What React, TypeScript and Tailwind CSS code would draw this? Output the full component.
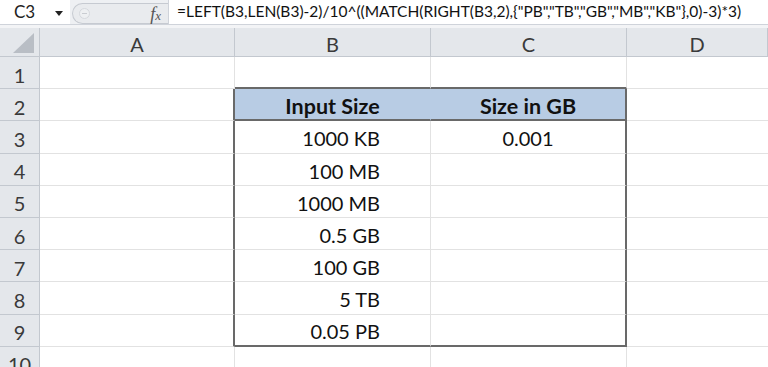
const rows: { n: number; b: string; c: string }[] = [
  { n: 1, b: '', c: '' },
  { n: 2, b: 'Input Size', c: 'Size in GB' },
  { n: 3, b: '1000 KB', c: '0.001' },
  { n: 4, b: '100 MB', c: '' },
  { n: 5, b: '1000 MB', c: '' },
  { n: 6, b: '0.5 GB', c: '' },
  { n: 7, b: '100 GB', c: '' },
  { n: 8, b: '5 TB', c: '' },
  { n: 9, b: '0.05 PB', c: '' },
  { n: 10, b: '', c: '' },
];

const formula = '=LEFT(B3,LEN(B3)-2)/10^((MATCH(RIGHT(B3,2),{"PB","TB","GB","MB","KB"},0)-3)*3)';

function aCls(n: number) {
  if (n >= 2 && n <= 9) return 'border-r-2 border-r-[#696969] border-b border-b-[#e2e2e2]';
  return 'border-r border-r-[#e2e2e2] border-b border-b-[#e2e2e2]';
}

function bCls(n: number) {
  if (n === 1) return 'border-r border-r-[#e2e2e2] border-b-2 border-b-[#696969]';
  if (n === 2) return 'bg-[#b8cce4] border-r border-r-[#b8cce4] border-b-2 border-b-[#696969] justify-center font-bold text-[21.5px]';
  if (n === 9) return 'border-r border-r-[#e2e2e2] border-b-2 border-b-[#696969] justify-end pr-[50px]';
  return 'border-r border-r-[#e2e2e2] border-b border-b-[#e2e2e2] justify-end pr-[50px]';
}

function cCls(n: number) {
  if (n === 1) return 'border-r border-r-[#e2e2e2] border-b-2 border-b-[#696969]';
  if (n === 2) return 'bg-[#b8cce4] border-r-2 border-r-[#696969] border-b-2 border-b-[#696969] justify-center font-bold text-[21.5px]';
  if (n === 9) return 'border-r-2 border-r-[#696969] border-b-2 border-b-[#696969] justify-center';
  if (n === 10) return 'border-r border-r-[#e2e2e2] border-b border-b-[#e2e2e2] justify-center';
  return 'border-r-2 border-r-[#696969] border-b border-b-[#e2e2e2] justify-center';
}

export default function App() {
  return (
    <div className="w-[768px] h-[367px] overflow-hidden bg-white text-[#111] font-['Lato',_'Open_Sans',_sans-serif]">
      {/* formula bar */}
      <div className="flex h-[25px] bg-[#eef0f3] border-b border-[#cfd3da]">
        <div className="w-[70px] bg-white flex items-center relative">
          <span className="ml-[14px] text-[17px] text-[#222]">C3</span>
          <svg className="absolute left-[55px] top-[11px]" width="8" height="5" viewBox="0 0 8 5">
            <path d="M0 0 L8 0 L4 5 Z" fill="#222" />
          </svg>
        </div>
        <div className="w-[98px] pt-[3px] pl-[2px]">
          <div className="h-[21px] rounded-l-full border border-r-0 border-[#c6cad1] bg-[#e9ebee] flex items-center">
            <div className="ml-[6px] w-[11px] h-[11px] rounded-full border border-[#d6d9de] bg-[#eef0f2] flex items-center justify-center">
              <div className="w-[5px] h-[1px] bg-[#c9ccd1]" />
            </div>
            <span className="ml-auto mr-[7px] font-['Liberation_Serif',_serif] italic text-[18px] text-[#555] leading-none">
              f<span className="text-[13px]">x</span>
            </span>
          </div>
        </div>
        <div className="flex-1 bg-white border-l border-[#cfd3da] flex items-center pl-[8px] text-[15.5px] text-[#111] whitespace-nowrap">
          {formula}
        </div>
      </div>
      <div className="h-[3px] bg-[#f3f4f6]" />

      {/* grid */}
      <div className="grid grid-cols-[40px_195px_196px_196px_1fr] grid-rows-[29px_repeat(10,32.2px)] text-[20px]">
        <div className="bg-[#e4e7eb] border-r border-b border-[#c3c8cf] relative">
          <svg className="absolute right-[5px] bottom-[3px]" width="21" height="20" viewBox="0 0 21 20">
            <path d="M0 20 L21 0 L21 20 Z" fill="#b9bec5" />
          </svg>
        </div>
        {['A', 'B', 'C', 'D'].map((l) => (
          <div
            key={l}
            className="bg-[#e4e7eb] border-r border-b border-[#c3c8cf] flex items-center justify-center pt-[3px] text-[#3a3a3a]"
          >
            {l}
          </div>
        ))}
        {rows.map((r) => (
          <div key={r.n} className="contents">
            <div className="bg-[#e4e7eb] border-r border-b border-[#c3c8cf] flex items-center justify-center pt-[4px] text-[#3a3a3a]">
              {r.n}
            </div>
            <div className={aCls(r.n)} />
            <div className={`flex items-center pt-[3px] ${bCls(r.n)}`}>{r.b}</div>
            <div className={`flex items-center pt-[3px] ${cCls(r.n)}`}>{r.c}</div>
            <div className="border-b border-b-[#e2e2e2]" />
          </div>
        ))}
      </div>
    </div>
  );
}
